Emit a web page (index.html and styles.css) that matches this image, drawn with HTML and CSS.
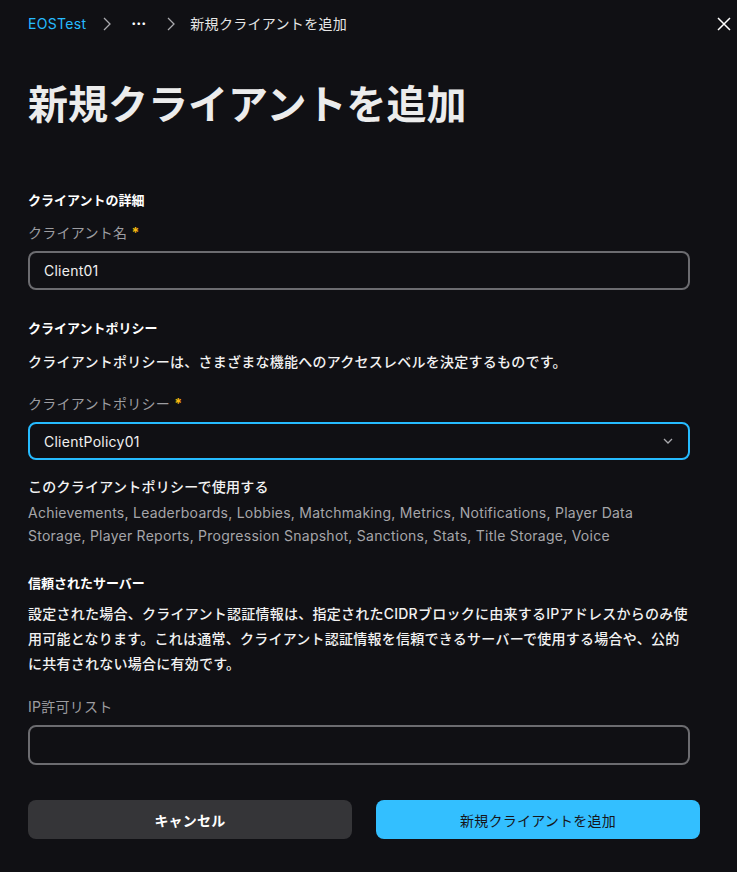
FILE: index.html
```html
<!DOCTYPE html>
<html lang="ja">
<head>
<meta charset="utf-8">
<title>新規クライアントを追加</title>
<link rel="stylesheet" href="styles.css">
</head>
<body>
<div class="page">
  <div class="topbar">
    <nav class="crumbs">
      <span class="crumb-link">EOSTest</span>
      <svg class="chev c1" width="8" height="14" viewBox="0 0 8 14"><polyline points="1,1 7,7 1,13" fill="none" stroke="#a9a9ad" stroke-width="1.3"/></svg>
      <span class="dots">···</span>
      <svg class="chev" width="8" height="14" viewBox="0 0 8 14"><polyline points="1,1 7,7 1,13" fill="none" stroke="#a9a9ad" stroke-width="1.3"/></svg>
      <span class="crumb-current">新規クライアントを追加</span>
    </nav>
    <svg class="close" width="14" height="14" viewBox="0 0 14 14"><path d="M1 1L13 13M13 1L1 13" stroke="#ffffff" stroke-width="1.5" fill="none"/></svg>
  </div>

  <h1 class="title">新規クライアントを追加</h1>

  <h2 class="section first">クライアントの詳細</h2>
  <div class="label">クライアント名 <span class="req">*</span></div>
  <div class="field">Client01</div>

  <h2 class="section s2">クライアントポリシー</h2>
  <p class="desc">クライアントポリシーは、さまざまな機能へのアクセスレベルを決定するものです。</p>
  <div class="label l2">クライアントポリシー <span class="req">*</span></div>
  <div class="field select">
    <span>ClientPolicy01</span>
    <svg class="sel-chev" width="10" height="6" viewBox="0 0 10 6"><polyline points="1,1 5,5 9,1" fill="none" stroke="#a9a9ad" stroke-width="1.3"/></svg>
  </div>
  <div class="uses-title">このクライアントポリシーで使用する</div>
  <p class="uses">Achievements, Leaderboards, Lobbies, Matchmaking, Metrics, Notifications, Player Data Storage, Player Reports, Progression Snapshot, Sanctions, Stats, Title Storage, Voice</p>

  <h2 class="section s3">信頼されたサーバー</h2>
  <p class="para">設定された場合、クライアント認証情報は、指定されたCIDRブロックに由来するIPアドレスからのみ使用可能となります。これは通常、クライアント認証情報を信頼できるサーバーで使用する場合や、公的に共有されない場合に有効です。</p>
  <div class="label l3">IP許可リスト</div>
  <div class="field empty"></div>

  <div class="actions">
    <button class="btn cancel">キャンセル</button>
    <button class="btn primary">新規クライアントを追加</button>
  </div>
</div>
</body>
</html>
```

FILE: styles.css
```css
* { box-sizing: border-box; }
html, body {
  margin: 0;
  padding: 0;
  background: #101014;
}
body {
  font-family: Inter, "Noto Sans CJK JP", "Noto Sans", sans-serif;
  color: #ffffff;
  font-size: 14px;
  letter-spacing: 0.25px;
}
.page {
  padding: 14px 47px 0 28px;
  height: 872px;
}
.topbar {
  display: flex;
  align-items: center;
  justify-content: space-between;
  height: 20px;
  margin-right: -41px;
}
.crumbs {
  display: flex;
  align-items: center;
  font-size: 14px;
  line-height: 20px;
}
.crumb-link { color: #26bbff; letter-spacing: 0.3px; }
.chev { display: block; }
.chev.c1 { margin-left: 17px; }
.dots {
  margin-left: 20px;
  margin-right: 21px;
  color: #ffffff;
  font-weight: 700;
  letter-spacing: 0;
  font-size: 15px;
}
.crumb-current {
  margin-left: 15px;
  color: #e6e6e6;
  letter-spacing: 0.3px;
}
.close { display: block; }

.title {
  margin: 47px 0 0 0;
  font-size: 40px;
  line-height: 48px;
  font-weight: 700;
  color: #ececec;
  letter-spacing: 0;
}
.section {
  margin: 0;
  font-size: 13px;
  line-height: 20px;
  font-weight: 700;
  color: #ffffff;
  letter-spacing: 0;
}
.section.first { margin-top: 61px; }
.section.s2 { margin-top: 28px; }
.section.s3 { margin-top: 26px; }

.label {
  margin-top: 13px;
  font-size: 14px;
  line-height: 20px;
  color: #9d9da1;
}
.label.l2 { margin-top: 22px; }
.label.l3 { margin-top: 21px; }
.req { color: #f6b90f; font-weight: 700; }

.field {
  margin-top: 8px;
  height: 39px;
  border: 2px solid #6c6c70;
  border-radius: 8px;
  padding: 0 14px;
  display: flex;
  align-items: center;
  font-size: 14px;
  color: #f0f0f0;
}
.field.select {
  height: 38px;
  border-color: #26bbff;
  justify-content: space-between;
  padding-right: 15px;
}
.field.empty { height: 40px; }
.sel-chev { display: block; }

.desc {
  margin: 14px 0 0 0;
  font-size: 14px;
  line-height: 20px;
  font-weight: 500;
  color: #f2f2f2;
}
.uses-title {
  margin-top: 17px;
  font-size: 14px;
  line-height: 20px;
  font-weight: 500;
  color: #f2f2f2;
}
.uses {
  margin: 4px 0 0 0;
  font-size: 14px;
  line-height: 23px;
  color: #a6a6aa;
}
.para {
  margin: 8px 0 0 0;
  font-size: 14px;
  line-height: 25px;
  font-weight: 500;
  color: #f2f2f2;
}
.actions {
  margin-top: 35px;
  margin-right: -10px;
  display: grid;
  grid-template-columns: 1fr 1fr;
  gap: 24px;
}
.btn {
  height: 39px;
  border: none;
  border-radius: 8px;
  font-family: Inter, "Noto Sans CJK JP", sans-serif;
  font-size: 14px;
  letter-spacing: 0.25px;
}
.btn.cancel {
  background: #353538;
  color: #ffffff;
  font-weight: 700;
}
.btn.primary {
  background: #33bfff;
  color: #16161a;
  font-weight: 400;
}
```
